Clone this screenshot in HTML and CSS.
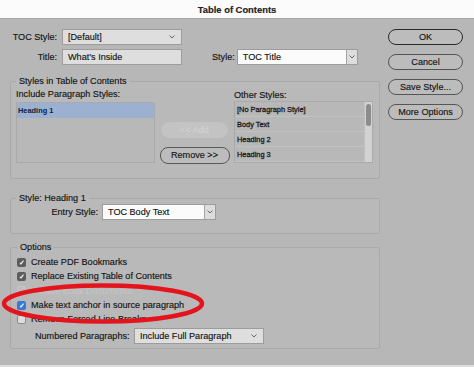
FILE: index.html
```html
<!DOCTYPE html>
<html lang="en">
<head>
    <meta charset="UTF-8">
    <title>Table of Contents</title>
    <link rel="stylesheet" href="styles.css">
</head>
<body>
    <div class="window">
        <div class="titlebar">Table of Contents</div>

        <div class="dialog">
            <div class="main">
                <div class="top-fields">
                    <div class="top-left">
                        <div class="field-row">
                            <label class="field-label">TOC Style:</label>
                            <div class="select select-gray w-toc">
                                <span>[Default]</span>
                                <svg class="chev" width="6" height="4" viewBox="0 0 6 4"><path d="M0.5 0.5 L3 3 L5.5 0.5" fill="none" stroke="#666" stroke-width="1"/></svg>
                            </div>
                        </div>
                        <div class="field-row">
                            <label class="field-label">Title:</label>
                            <div class="input w-toc">What’s Inside</div>
                        </div>
                    </div>
                    <div class="field-row style-row">
                        <label class="style-label">Style:</label>
                        <div class="select select-white w-style">
                            <span>TOC Title</span>
                            <span class="chev-box"><svg width="6" height="4" viewBox="0 0 6 4"><path d="M0.5 0.5 L3 3 L5.5 0.5" fill="none" stroke="#666" stroke-width="1"/></svg></span>
                        </div>
                    </div>
                </div>

                <fieldset class="group group-styles">
                    <legend>Styles in Table of Contents</legend>
                    <div class="styles-cols">
                        <div class="list-col">
                            <div class="list-label">Include Paragraph Styles:</div>
                            <div class="list list-include">
                                <div class="row selected">Heading 1</div>
                            </div>
                        </div>
                        <div class="mid-col">
                            <div class="btn btn-disabled">&lt;&lt; Add</div>
                            <div class="btn btn-remove">Remove &gt;&gt;</div>
                        </div>
                        <div class="list-col other-col">
                            <div class="list-label">Other Styles:</div>
                            <div class="list list-other">
                                <div class="rows">
                                    <div class="row">[No Paragraph Style]</div>
                                    <div class="row">Body Text</div>
                                    <div class="row">Heading 2</div>
                                    <div class="row">Heading 3</div>
                                </div>
                                <div class="scrollbar"><div class="thumb"></div></div>
                            </div>
                        </div>
                    </div>
                </fieldset>

                <fieldset class="group group-entry">
                    <legend>Style: Heading 1</legend>
                    <div class="field-row">
                        <label class="entry-label">Entry Style:</label>
                        <div class="select select-white w-entry">
                            <span>TOC Body Text</span>
                            <span class="chev-box"><svg width="6" height="4" viewBox="0 0 6 4"><path d="M0.5 0.5 L3 3 L5.5 0.5" fill="none" stroke="#666" stroke-width="1"/></svg></span>
                        </div>
                    </div>
                </fieldset>

                <fieldset class="group group-options">
                    <legend>Options</legend>
                    <div class="check-row"><span class="box checked-dark">&#10003;</span>Create PDF Bookmarks</div>
                    <div class="check-row"><span class="box checked-dark">&#10003;</span>Replace Existing Table of Contents</div>
                    <div class="check-row disabled"><span class="box box-disabled"></span>Include Book Documents</div>
                    <div class="check-row"><span class="box checked-blue">&#10003;</span>Make text anchor in source paragraph</div>
                    <div class="check-row"><span class="box box-empty"></span>Remove Forced Line Breaks</div>
                    <div class="field-row numbered-row">
                        <label class="numbered-label">Numbered Paragraphs:</label>
                        <div class="select select-gray w-numbered">
                            <span>Include Full Paragraph</span>
                            <svg class="chev" width="6" height="4" viewBox="0 0 6 4"><path d="M0.5 0.5 L3 3 L5.5 0.5" fill="none" stroke="#666" stroke-width="1"/></svg>
                        </div>
                    </div>
                </fieldset>
            </div>

            <div class="side">
                <div class="btn btn-side btn-default">OK</div>
                <div class="btn btn-side">Cancel</div>
                <div class="btn btn-side">Save Style...</div>
                <div class="btn btn-side">More Options</div>
            </div>
        </div>

        <!-- red marker drawn over the options -->
        <svg class="marker" width="474" height="367" viewBox="0 0 474 367">
            <ellipse cx="103" cy="303.5" rx="99" ry="18" fill="none" stroke="#e3141c" stroke-width="4.5"/>
        </svg>
    </div>
</body>
</html>
```

FILE: styles.css
```css
body {
    margin: 0;
    font-family: "Liberation Sans", Arial, sans-serif;
    font-size: 9.1px;
    color: #141414;
    background: #ffffff;
}

.window {
    width: 474px;
    height: 367px;
    position: relative;
    overflow: hidden;
    background: #b7b7b7;
    border-bottom: 2px solid #dcdcdc;
    box-sizing: border-box;
    white-space: nowrap;
    -webkit-text-stroke: 0.15px #141414;
}

.titlebar {
    height: 19px;
    line-height: 19px;
    background: #fbfbfb;
    text-align: center;
    font-weight: bold;
    font-size: 9.4px;
    color: #222;
    border-bottom: 1px solid #a8a8a8;
    box-sizing: border-box;
}

.dialog {
    display: flex;
    padding: 10px 0 0 10px;
}

.main {
    width: 370px;
}

.top-fields {
    display: flex;
    align-items: flex-end;
}

.top-left {
    display: flex;
    flex-direction: column;
    gap: 4px;
}

.field-row {
    display: flex;
    align-items: center;
}

.field-label {
    width: 47px;
    text-align: right;
    margin-right: 5px;
}

.style-label {
    margin-left: 30px;
    margin-right: 2px;
}

.entry-label {
    width: 82px;
    text-align: right;
    margin-right: 4px;
}

.numbered-label {
    width: 99px;
    margin-left: 18px;
}

.select, .input {
    height: 16px;
    box-sizing: border-box;
    display: flex;
    align-items: center;
    justify-content: space-between;
    padding-left: 5px;
    border: 1px solid #9c9c9c;
}

.select-gray, .input {
    background: #dedede;
}

.select-white {
    background: #fbfbfb;
    padding-right: 0;
}

.chev {
    margin-right: 6px;
}

.chev-box {
    width: 11px;
    height: 14px;
    background: #dddddd;
    border-left: 1px solid #a5a5a5;
    box-sizing: border-box;
    display: flex;
    align-items: center;
    justify-content: center;
}

.w-toc { width: 120px; }
.w-style { width: 121px; }
.w-entry { width: 114px; }
.w-numbered { width: 130px; }

/* group boxes */
.group {
    margin: 0;
    border: 1px solid #a9a9a9;
    border-radius: 2px;
    background: #b9b9b9;
    padding: 0 5px;
}

.group legend {
    padding: 0 3px;
    line-height: 12px;
}

.group-styles {
    margin-top: 10px;
    padding-bottom: 14px;
}

.styles-cols {
    display: flex;
}

.list-col {
    width: 139px;
}

.list-label {
    height: 12px;
    line-height: 12px;
    margin-top: 1px;
    margin-bottom: 2px;
}

.other-col .list-label {
    margin-top: 2px;
    margin-bottom: 0;
}

.list {
    height: 61px;
    box-sizing: border-box;
    border: 1px solid #aaaaaa;
    background: #b8b8b8;
}

.list-other {
    height: 62px;
    display: flex;
}

.rows {
    flex: 1;
}

.row {
    height: 15px;
    line-height: 15px;
    padding-left: 2px;
    font-size: 7.4px;
    color: #1c1c1c;
    -webkit-text-stroke: 0.3px #1c1c1c;
    border-bottom: 1px solid #c2c2c2;
    box-sizing: border-box;
}

.list-include .row {
    border-bottom: none;
    padding-left: 1px;
    font-weight: bold;
    -webkit-text-stroke: 0;
}

.row.selected {
    background: #9cb0d2;
    color: #10203a;
}

.scrollbar {
    width: 8px;
    background: #d2d2d2;
    border-left: 1px solid #c0c0c0;
    padding: 2px 1px;
    box-sizing: border-box;
}

.thumb {
    height: 22px;
    border-radius: 3px;
    background: #8c8c8c;
}

.mid-col {
    width: 79px;
    display: flex;
    flex-direction: column;
    align-items: center;
    padding-top: 35px;
    gap: 9px;
}

.btn {
    height: 16px;
    line-height: 14px;
    border-radius: 8px;
    text-align: center;
    box-sizing: border-box;
}

.btn-disabled {
    width: 67px;
    background: #c3c3c3;
    color: #d4d4d4;
    -webkit-text-stroke: 0;
    border: 1px solid #c3c3c3;
}

.btn-remove {
    width: 70px;
    height: 17px;
    line-height: 15px;
    border: 1px solid #585858;
    background: #bcbcbc;
}

.group-entry {
    margin-top: 13px;
    padding-bottom: 13px;
}

.group-options {
    margin-top: 7px;
    padding-top: 2px;
    padding-bottom: 4px;
    padding-left: 6px;
}

.check-row {
    height: 14.3px;
    display: flex;
    align-items: center;
}

.check-row.disabled {
    color: #c6c6c6;
    -webkit-text-stroke: 0;
}

.box {
    width: 9px;
    height: 9px;
    border-radius: 2px;
    margin-right: 5px;
    box-sizing: border-box;
    font-size: 7px;
    line-height: 9px;
    text-align: center;
    color: #fff;
    -webkit-text-stroke: 0;
    font-weight: bold;
}

.checked-dark {
    background: #5c5c5c;
}

.checked-blue {
    background: #3b78d6;
}

.box-disabled {
    border: 1px solid #c6c6c6;
    background: #bdbdbd;
}

.box-empty {
    border: 1px solid #8a8a8a;
    background: #dcdcdc;
}

.numbered-row {
    margin-top: 2px;
}

/* right column buttons */
.side {
    margin-left: 8px;
    display: flex;
    flex-direction: column;
    gap: 9px;
}

.btn-side {
    width: 75px;
    border: 1px solid #555;
    background: #bcbcbc;
}

.btn-default {
    border: 1.5px solid #2a2a2a;
}

.marker {
    position: absolute;
    left: 0;
    top: 0;
    pointer-events: none;
}
```
